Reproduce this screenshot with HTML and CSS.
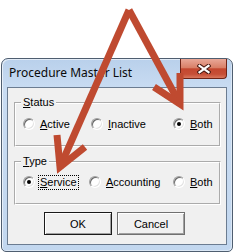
FILE: index.html
```html
<!DOCTYPE html>
<html>
<head>
<meta charset="utf-8">
<link rel="stylesheet" href="styles.css">
</head>
<body>
<div class="stage">
  <div class="window">
    <div class="titlebar">
      <span class="title">Procedure Master List</span>
      <span class="close">
        <svg width="14" height="10" viewBox="0 0 14 10">
          <path d="M2.5 1.8 L11.5 8.2 M11.5 1.8 L2.5 8.2" stroke="#4a1a12" stroke-width="4.2" stroke-linecap="square" fill="none"/>
          <path d="M2.5 1.8 L11.5 8.2 M11.5 1.8 L2.5 8.2" stroke="#ffffff" stroke-width="2.2" stroke-linecap="square" fill="none"/>
        </svg>
      </span>
    </div>
    <div class="client">
      <fieldset class="group status">
        <legend><u>S</u>tatus</legend>
        <div class="options">
          <label class="opt w-active"><span class="radio"></span><span><u>A</u>ctive</span></label>
          <label class="opt w-inactive"><span class="radio"></span><span><u>I</u>nactive</span></label>
          <label class="opt"><span class="radio on"></span><span><u>B</u>oth</span></label>
        </div>
      </fieldset>
      <fieldset class="group type">
        <legend><u>T</u>ype</legend>
        <div class="options">
          <label class="opt w-service"><span class="radio on"></span><span class="focus"><u>S</u>ervice</span></label>
          <label class="opt w-accounting"><span class="radio"></span><span><u>A</u>ccounting</span></label>
          <label class="opt"><span class="radio"></span><span><u>B</u>oth</span></label>
        </div>
      </fieldset>
      <div class="buttons">
        <button class="btn default">OK</button>
        <button class="btn">Cancel</button>
      </div>
    </div>
  </div>
</div>
<svg class="arrows" width="234" height="252" viewBox="0 0 234 252">
  <g fill="none" stroke="#bf4a30" stroke-width="7" stroke-linejoin="miter" stroke-miterlimit="10">
    <line x1="129" y1="10" x2="180" y2="104"/>
    <polyline points="154,87 180,104 180,73"/>
    <line x1="129" y1="10" x2="60" y2="167"/>
    <polyline points="57,135 60,167 85,147"/>
  </g>
</svg>
</body>
</html>
```

FILE: styles.css
```css
* { box-sizing: border-box; }
html, body { margin: 0; padding: 0; }
body {
  width: 234px;
  height: 252px;
  background: #ffffff;
  position: relative;
  overflow: hidden;
  font-family: "Liberation Sans", Arial, sans-serif;
  font-size: 11px;
  color: #000;
}
.stage { padding: 58px 0 0 1px; }
.window {
  width: 232px;
  border: 1px solid #4f5e70;
  border-radius: 7px 7px 5px 5px;
  background: linear-gradient(#b9d0eb, #c9dcf2 30px, #c2d7ef);
  padding: 0 5px 6px;
  box-shadow: inset 1px 1px 0 rgba(255,255,255,0.6), inset -1px -1px 0 rgba(255,255,255,0.4);
}
.titlebar {
  height: 28px;
  display: flex;
  justify-content: space-between;
  align-items: flex-start;
}
.title {
  font-family: "Noto Sans", sans-serif;
  font-size: 12px;
  line-height: 16px;
  padding: 6px 0 0 2px;
  color: #0a0a0a;
  white-space: nowrap;
}
.close {
  width: 47px;
  height: 20px;
  border: 1px solid #6e2417;
  border-top: none;
  border-radius: 0 0 4px 4px;
  background: linear-gradient(#e9a898, #d98068 45%, #c4472f 52%, #c64f37 80%, #d9775d);
  display: flex;
  align-items: center;
  justify-content: center;
}
.close svg { display: block; }
.client {
  border: 1px solid #6b7c91;
  background: #f0f0f0;
  padding: 0 5px 9px 6px;
}
.group {
  margin: 8px 0 0;
  padding: 7px 0 13px;
  border: 2px groove #ffffff;
  min-width: 0;
}
.group.type { padding-top: 6px; }
.group legend {
  margin-left: 5px;
  padding: 0 2px;
  line-height: 13px;
}
.options {
  display: flex;
  align-items: center;
  height: 16px;
  padding-left: 7px;
}
.opt {
  display: flex;
  align-items: center;
  flex: none;
  line-height: 13px;
}
.w-active { width: 68px; }
.w-inactive { width: 82px; }
.w-service { width: 66px; }
.w-accounting { width: 84px; }
.radio {
  width: 12px;
  height: 12px;
  border-radius: 50%;
  background: #fff;
  border: 1px solid;
  border-color: #a0a0a0 #ffffff #ffffff #a0a0a0;
  box-shadow: inset 1px 1px 0 #696969, inset -1px -1px 0 #e3e3e3;
  margin-right: 5px;
  position: relative;
  flex: none;
}
.radio.on::after {
  content: "";
  position: absolute;
  left: 3px;
  top: 3px;
  width: 4px;
  height: 4px;
  border-radius: 50%;
  background: #000;
}
.focus {
  margin-left: -2px;
  padding: 0 1px;
  border: 1px dotted #000;
}
.buttons {
  display: flex;
  gap: 5px;
  margin-top: 7px;
  padding-left: 30px;
}
.btn {
  width: 68px;
  height: 23px;
  padding: 0;
  background: #f0f0f0;
  border: 1px solid #707070;
  box-shadow: inset 1px 1px 0 #ffffff, inset -1px -1px 0 #a0a0a0;
  font: inherit;
  color: #000;
  display: flex;
  align-items: center;
  justify-content: center;
}
.btn.default { border-color: #1a1a1a; }
.arrows {
  position: absolute;
  left: 0;
  top: 0;
  pointer-events: none;
}
```
